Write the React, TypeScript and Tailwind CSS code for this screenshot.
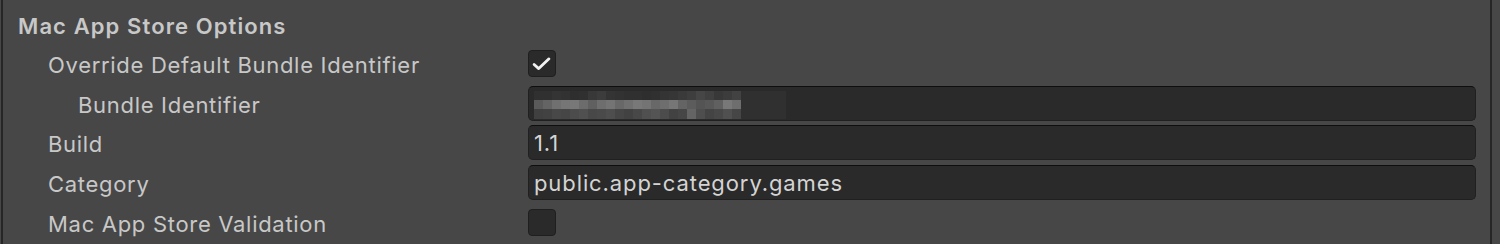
import type { ReactNode } from 'react'

const font = { fontFamily: 'Inter, "Noto Sans", sans-serif' }

// pixelated (blurred) bundle id, grey levels per 9px block
const blurRows = [
  [48, 48, 52, 50, 46, 48, 56, 60, 52, 50, 48, 48, 46, 48, 52, 54, 58, 62, 70, 64, 56, 60, 66],
  [90, 100, 112, 118, 120, 108, 96, 110, 116, 104, 112, 120, 116, 104, 110, 118, 100, 92, 84, 88, 96, 120, 110],
  [64, 66, 72, 70, 76, 80, 72, 74, 78, 70, 66, 72, 80, 84, 76, 66, 70, 100, 78, 68, 72, 80, 70],
]

function Blurred() {
  return (
    <svg width="252" height="28" viewBox="0 0 252 28" className="block">
      <rect x="0" y="0" width="252" height="28" fill="#303030" />
      {blurRows.map((row, r) =>
        row.map((g, c) => (
          <rect
            key={`${r}-${c}`}
            x={c * 9}
            y={r * 9}
            width="9"
            height={r === 2 ? 10 : 9}
            fill={`rgb(${g},${g},${g})`}
          />
        ))
      )}
    </svg>
  )
}

function Checkbox({ checked }: { checked?: boolean }) {
  return (
    <div className="w-[28px] h-[27px] mb-[3px] rounded-[4px] bg-[#2a2a2a] border border-[#1f1f1f] flex items-center justify-center">
      {checked && (
        <svg width="28" height="27" viewBox="0 0 28 27" className="block">
          <path d="M5.5 14.5 L10.5 19 L21.5 8.5" fill="none" stroke="#f2f2f2" strokeWidth="3" strokeLinecap="round" strokeLinejoin="round" />
        </svg>
      )}
    </div>
  )
}

function Field({ children }: { children?: ReactNode }) {
  return (
    <div className="flex-1 h-[35px] mb-[3px] rounded-[5px] bg-[#2a2a2a] border border-[#202020] border-t-[#0e0e0e] flex items-center pl-[5px] pt-[2px] text-[22px] tracking-[0.9px] text-[#d4d4d4] overflow-hidden">
      {children}
    </div>
  )
}

function Row({ label, indent, children }: { label: string; indent: number; children: ReactNode }) {
  return (
    <div className="h-10 flex items-center">
      <div className={`w-[525px] flex-none pt-px text-[22px] tracking-[0.7px] text-[#c8c8c8] ${indent === 2 ? 'pl-[75px]' : 'pl-[45px]'}`}>
        {label}
      </div>
      <div className="flex-1 flex items-center">{children}</div>
    </div>
  )
}

export default function App() {
  return (
    <div className="w-[1500px] h-[244px] bg-[#474747] flex overflow-hidden" style={font}>
      <div className="ml-px w-[2px] h-full bg-[#262626] flex-none" />
      <div className="w-[1487px] flex-none pt-[5px] pr-[14px] flex flex-col">
        <div className="h-10 flex items-center pt-[3px] pl-[15px] text-[22px] tracking-[1.1px] font-semibold text-[#c8c8c8]">
          Mac App Store Options
        </div>
        <Row label="Override Default Bundle Identifier" indent={1}>
          <Checkbox checked />
        </Row>
        <Row label="Bundle Identifier" indent={2}>
          <Field>
            <div className="pt-px">
              <Blurred />
            </div>
          </Field>
        </Row>
        <Row label="Build" indent={1}>
          <Field>1.1</Field>
        </Row>
        <Row label="Category" indent={1}>
          <Field>public.app-category.games</Field>
        </Row>
        <Row label="Mac App Store Validation" indent={1}>
          <Checkbox />
        </Row>
      </div>
      <div className="w-[2px] h-full bg-[#262626] flex-none" />
    </div>
  )
}
